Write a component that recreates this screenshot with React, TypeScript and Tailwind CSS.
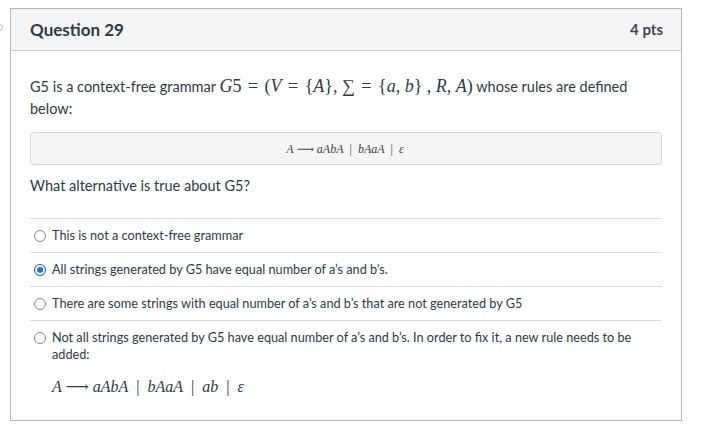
import React from 'react';

const MATH = '"Liberation Serif", "DejaVu Serif", serif';

function Radio({ checked }: { checked?: boolean }) {
  if (checked) {
    return (
      <span className="w-[12px] h-[12px] rounded-full bg-[#1a73e8] border border-[#1559c0] flex items-center justify-center shrink-0">
        <span className="w-[10px] h-[10px] rounded-full border-[2px] border-white bg-[#2f7fe8] flex items-center justify-center">
          <span className="w-[5px] h-[5px] rounded-full bg-[#1a73e8]" />
        </span>
      </span>
    );
  }
  return <span className="w-[12px] h-[12px] rounded-full border border-[#8a8a8a] bg-white shrink-0" />;
}

function I({ children }: { children: React.ReactNode }) {
  return <i>{children}</i>;
}

function Eq() {
  return <span className="mx-[2px]">=</span>;
}

const ANSWERS = [
  { text: 'This is not a context-free grammar' },
  { text: 'All strings generated by G5 have equal number of a’s and b’s.', checked: true },
  { text: 'There are some strings with equal number of a’s and b’s that are not generated by G5' },
];

export default function App() {
  return (
    <div className="w-[704px] h-[426px] bg-white relative pt-[8px] pl-[10px]" style={{ fontFamily: 'Lato, "Noto Sans", sans-serif' }}>
      <span className="absolute left-[-4px] top-[24px] w-[7px] h-[7px] rounded-full border border-[#bbb]" />
      <div className="w-[672px] h-[413px] border border-[#b4b8bb] text-[#2d3b45]">
        {/* header */}
        <div className="h-[42px] bg-[#f5f5f5] border-b border-[#c7cdd1] flex items-center justify-between pl-[19px] pr-[18px]">
          <span className="text-[17px] font-bold">Question 29</span>
          <span className="text-[15px] font-bold text-[#3d4a52]">4 pts</span>
        </div>

        <div className="pl-[19px] pr-[19px] pt-[25px]">
          <p className="text-[14.5px] leading-[22px]">
            G5 is a context-free grammar{' '}
            <span className="text-[18px] leading-none" style={{ fontFamily: MATH }}>
              <I>G</I>5&nbsp;<Eq />&nbsp;(<I>V</I>&nbsp;<Eq />&nbsp;{'{'}<I>A</I>{'}'},&nbsp;∑&nbsp;<Eq />&nbsp;{'{'}<I>a</I>,&nbsp;<I>b</I>{'}'}&nbsp;,&nbsp;<I>R</I>,&nbsp;<I>A</I>)
            </span>{' '}
            whose rules are defined
            <br />
            below:
          </p>

          <div className="mt-[12px] h-[33px] rounded-[4px] bg-[#f5f5f5] border border-[#d6d6d6] flex items-center justify-center text-[12px] text-[#444]" style={{ fontFamily: MATH }}>
            <span className="pr-[2px]">
              <I>A</I>&nbsp;⟶&nbsp;<I>aAbA</I>&nbsp;&nbsp;|&nbsp;&nbsp;<I>bAaA</I>&nbsp;&nbsp;|&nbsp;&nbsp;<I>ε</I>
            </span>
          </div>

          <p className="mt-[10px] text-[14.5px] leading-[22px]">What alternative is true about G5?</p>

          <div className="mt-[21px] text-[12.7px]">
            {ANSWERS.map(a => (
              <div key={a.text} className="border-t border-[#dcdcdc] py-[8px] leading-[17px] flex items-center gap-[6px] pl-[4px]">
                <Radio checked={a.checked} />
                <span>{a.text}</span>
              </div>
            ))}
            <div className="border-t border-[#dcdcdc] pt-[8px] leading-[17px] flex items-start gap-[6px] pl-[4px]">
              <span className="mt-[3px] flex"><Radio /></span>
              <div className="pr-[20px]">
                <p>Not all strings generated by G5 have equal number of a’s and b’s. In order to fix it, a new rule needs to be added:</p>
                <p className="mt-[13px] text-[16px] leading-[22px]" style={{ fontFamily: MATH }}>
                  <I>A</I>&nbsp;⟶&nbsp;<I>aAbA</I>&nbsp;&nbsp;|&nbsp;&nbsp;<I>bAaA</I>&nbsp;&nbsp;|&nbsp;&nbsp;<I>ab</I>&nbsp;&nbsp;|&nbsp;&nbsp;<I>ε</I>
                </p>
              </div>
            </div>
          </div>
        </div>
      </div>
    </div>
  );
}
